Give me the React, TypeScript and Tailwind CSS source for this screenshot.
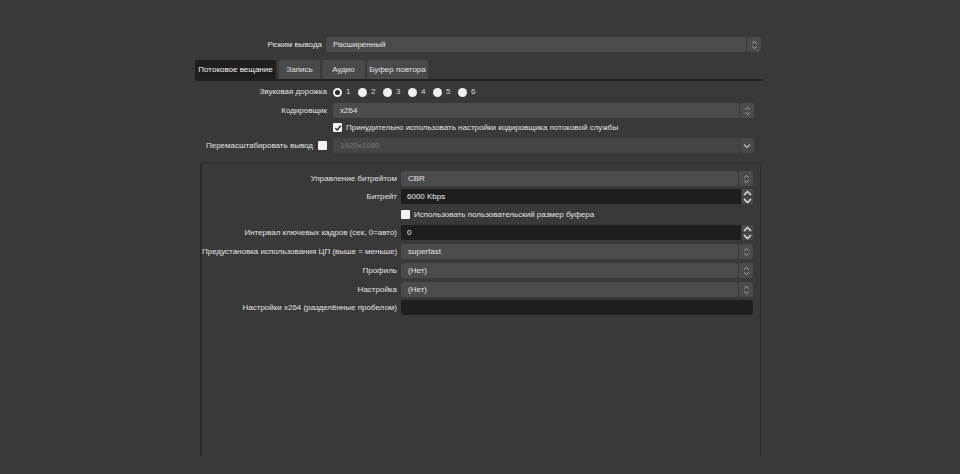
import React from "react";

const UpDown = () => (
  <svg width="7" height="10" viewBox="0 0 7 10" fill="none">
    <path d="M1.2 3.6 L3.5 1.4 L5.8 3.6" stroke="#a9a9a9" strokeWidth="1" />
    <path d="M1.2 6.4 L3.5 8.6 L5.8 6.4" stroke="#a9a9a9" strokeWidth="1" />
  </svg>
);

const Down = () => (
  <svg width="8" height="6" viewBox="0 0 8 6" fill="none">
    <path d="M1 1.5 L4 4.5 L7 1.5" stroke="#bdbdbd" strokeWidth="1.2" />
  </svg>
);

const Chev = ({ up }: { up?: boolean }) => (
  <svg width="9" height="6" viewBox="0 0 9 6" fill="none">
    {up ? (
      <path d="M1 5 L4.5 1.5 L8 5" stroke="#e6e6e6" strokeWidth="1.4" />
    ) : (
      <path d="M1 1 L4.5 4.5 L8 1" stroke="#e6e6e6" strokeWidth="1.4" />
    )}
  </svg>
);

const Combo = ({ text, disabled, single }: { text: string; disabled?: boolean; single?: boolean }) => (
  <div className="flex h-[15px] flex-1">
    <div
      className={
        disabled
          ? "flex-1 rounded-[2px] bg-[#464546] pl-[7px] flex items-center text-[#7a7a7a]"
          : "flex-1 rounded-[2px] bg-[#4c4b4c] pl-[7px] flex items-center text-[#e4e4e4]"
      }
    >
      {text}
    </div>
    <div
      className={
        disabled
          ? "w-[14px] ml-[1px] rounded-[2px] bg-[#4a494a] flex items-center justify-center"
          : "w-[14px] ml-[1px] rounded-[2px] bg-[#4c4b4c] flex items-center justify-center"
      }
    >
      {single ? <Down /> : <UpDown />}
    </div>
  </div>
);

const Spin = ({ text }: { text: string }) => (
  <div className="flex h-[15px] flex-1">
    <div className="flex-1 rounded-[1px] bg-[#1f1e1f] pl-[6px] flex items-center text-[#f0f0f0]">{text}</div>
    <div className="w-[11px] ml-[1px] flex flex-col gap-[1px]">
      <div className="h-[7px] rounded-[1px] bg-[#4c4b4c] flex items-center justify-center">
        <Chev up />
      </div>
      <div className="h-[7px] rounded-[1px] bg-[#4c4b4c] flex items-center justify-center">
        <Chev />
      </div>
    </div>
  </div>
);

const Check = ({ checked }: { checked?: boolean }) => (
  <div className="w-[9px] h-[9px] bg-[#f2f2f2] rounded-[1px] flex items-center justify-center">
    {checked && (
      <svg width="8" height="8" viewBox="0 0 8 8" fill="none">
        <path d="M1.3 4.2 L3.2 6 L6.8 1.8" stroke="#2a2a2a" strokeWidth="1.4" />
      </svg>
    )}
  </div>
);

const Radio = ({ n, on }: { n: number; on?: boolean }) => (
  <div className="flex items-center w-[25px] gap-[4px]">
    {on ? (
      <div className="w-[9px] h-[9px] rounded-full border-[2px] border-[#f0f0f0] bg-[#2a2a2a]" />
    ) : (
      <div className="w-[9px] h-[9px] rounded-full bg-[#f0f0f0]" />
    )}
    <span className="text-[#d8d8d8]">{n}</span>
  </div>
);

export default function App() {
  return (
    <div
      className="w-[960px] h-[474px] bg-[#3a393a] overflow-hidden text-[8px] leading-none text-[#e2e2e2]"
      style={{ fontFamily: '"Liberation Sans", Arial, sans-serif' }}
    >
      <div className="pt-[37px] pl-[195px] w-[763px]">
        {/* Output mode */}
        <div className="flex h-[15px] items-center">
          <div className="w-[127px] text-right">Режим вывода</div>
          <div className="ml-[4px] w-[435px] flex">
            <Combo text="Расширенный" />
          </div>
        </div>

        {/* Tabs */}
        <div className="mt-[8px] flex items-end gap-[2px] h-[19px]">
          <div className="w-[81px] h-[19px] bg-[#1f1e1f] rounded-t-[2px] flex items-center justify-center text-[#f2f2f2]">
            Потоковое вещание
          </div>
          <div className="ml-[1px] w-[41px] h-[19px] bg-[#4a494a] rounded-t-[2px] flex items-center justify-center">
            Запись
          </div>
          <div className="w-[43px] h-[19px] bg-[#4a494a] rounded-t-[2px] flex items-center justify-center">
            Аудио
          </div>
          <div className="w-[61px] h-[19px] bg-[#4a494a] rounded-t-[2px] flex items-center justify-center">
            Буфер повтора
          </div>
        </div>
        <div className="h-[2px] bg-[#222122] w-[568px]" />

        {/* Tab content */}
        <div className="mt-[5px] flex h-[12px] items-center">
          <div className="w-[132px] text-right">Звуковая дорожка</div>
          <div className="ml-[6px] flex items-center">
            <Radio n={1} on />
            <Radio n={2} />
            <Radio n={3} />
            <Radio n={4} />
            <Radio n={5} />
            <Radio n={6} />
          </div>
        </div>

        <div className="mt-[5px] flex h-[15px] items-center">
          <div className="w-[132px] text-right">Кодировщик</div>
          <div className="ml-[6px] w-[421px] flex">
            <Combo text="x264" />
          </div>
        </div>

        <div className="mt-[3px] flex h-[13px] items-center">
          <div className="w-[132px]" />
          <div className="ml-[6px] flex items-center gap-[4px]">
            <Check checked />
            <span>Принудительно использовать настройки кодировщика потоковой службы</span>
          </div>
        </div>

        <div className="mt-[4px] flex h-[15px] items-center">
          <div className="w-[132px] flex justify-end items-center gap-[5px]">
            <span>Перемасштабировать вывод</span>
            <Check />
          </div>
          <div className="ml-[6px] w-[421px] flex">
            <Combo text="1920x1080" disabled single />
          </div>
        </div>

        {/* Panel */}
        <div className="mt-[10px] ml-[5px] w-[561px] h-[293px] border-t border-r border-l-2 border-[#2a292a] pt-[7px]">
          <div className="flex flex-col">
            <PRow label="Управление битрейтом">
              <Combo text="CBR" />
            </PRow>
            <PRow label="Битрейт" mt="mt-[3px]">
              <Spin text="6000 Kbps" />
            </PRow>
            <div className="mt-[4px] flex h-[13px] items-center">
              <div className="w-[195px]" />
              <div className="ml-[4px] flex items-center gap-[4px]">
                <Check />
                <span>Использовать пользовательский размер буфера</span>
              </div>
            </div>
            <PRow label="Интервал ключевых кадров (сек, 0=авто)" mt="mt-[4px]">
              <Spin text="0" />
            </PRow>
            <PRow label="Предустановка использования ЦП (выше = меньше)" mt="mt-[4px]">
              <Combo text="superfast" />
            </PRow>
            <PRow label="Профиль" mt="mt-[4px]">
              <Combo text="(Нет)" />
            </PRow>
            <PRow label="Настройка" mt="mt-[4px]">
              <Combo text="(Нет)" />
            </PRow>
            <PRow label="Настройки x264 (разделённые пробелом)" mt="mt-[3px]">
              <div className="flex-1 h-[15px] rounded-[2px] bg-[#1f1e1f]" />
            </PRow>
          </div>
        </div>
      </div>
    </div>
  );
}

function PRow({ label, children, mt }: { label: string; children: React.ReactNode; mt?: string }) {
  return (
    <div className={"flex h-[15px] items-center " + (mt ?? "")}>
      <div className="w-[195px] text-right whitespace-nowrap">{label}</div>
      <div className="ml-[4px] w-[352px] flex">{children}</div>
    </div>
  );
}
